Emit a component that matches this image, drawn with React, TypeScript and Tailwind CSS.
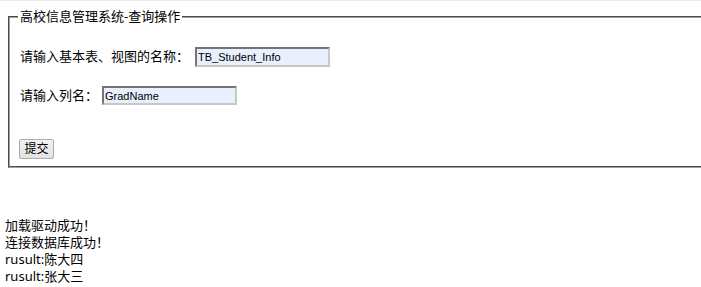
import React from "react";

const cjk = { fontFamily: '"Noto Sans", "Noto Sans CJK SC", sans-serif' };

export default function App(): React.JSX.Element {
    return <div className="w-[701px] h-[287px] bg-white text-black overflow-hidden font-['Noto_Sans','Noto_Sans_CJK_SC',sans-serif]">
        <div className="h-px bg-[#ececec]"></div>
        <fieldset className="mt-[7px] ml-[8px] w-[720px] border-2 [border-style:groove] border-[#a0a0a0] pl-[8px] pb-[7px]">
            <legend className="text-[13px] leading-[17px] px-[2px]">高校信息管理系统-查询操作</legend>
            <div className="pl-[2px]">
                <div className="flex items-center h-[20px] mt-[22px] text-[13px]">
                    <span className="w-[175px]">请输入基本表、视图的名称：</span>
                    <input defaultValue="TB_Student_Info" className="w-[135px] h-[20px] px-[1px] bg-[#e8f0fe] border-2 [border-style:inset] border-[#c8c8c8] text-[11px] font-['Liberation_Sans',Arial,sans-serif] outline-none" />
                </div>
                <div className="flex items-center h-[19px] mt-[19px] text-[13px]">
                    <span className="w-[82px]">请输入列名：</span>
                    <input defaultValue="GradName" className="w-[135px] h-[19px] px-[1px] bg-[#e8f0fe] border-2 [border-style:inset] border-[#c8c8c8] text-[11px] font-['Liberation_Sans',Arial,sans-serif] outline-none" />
                </div>
                <button className="mt-[34px] -ml-px w-[35px] h-[20px] text-[12px] leading-none border border-[#acacac] rounded-[2px] bg-gradient-to-b from-[#f2f2f2] to-[#e2e2e2]">提交</button>
            </div>
        </fieldset>
        <div className="mt-[49px] ml-[5px] text-[13px] leading-[17px]" style={cjk}>
            <div>加载驱动成功！</div>
            <div>连接数据库成功！</div>
            <div>rusult:陈大四</div>
            <div>rusult:张大三</div>
        </div>
    </div>
}
